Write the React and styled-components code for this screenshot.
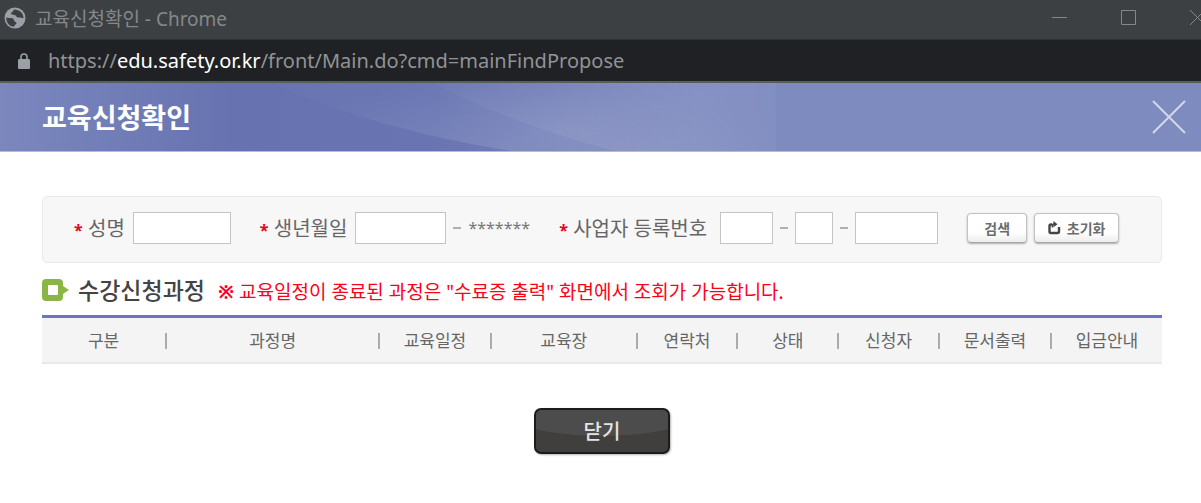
import React, { useState } from 'react'
import styled, { createGlobalStyle } from 'styled-components'

const columns = [
  { name: '구분', width: 11 },
  { name: '과정명', width: 19 },
  { name: '교육일정', width: 10 },
  { name: '교육장', width: 13 },
  { name: '연락처', width: 9 },
  { name: '상태', width: 9 },
  { name: '신청자', width: 9 },
  { name: '문서출력', width: 10 },
  { name: '입금안내', width: 10 },
]

const emptyForm = { name: '', birth: '', biz1: '', biz2: '', biz3: '' }

function GlobeIcon() {
  return (
    <svg width="22" height="22" viewBox="0 0 22 22" aria-hidden="true">
      <circle cx="11" cy="11" r="10.5" fill="#9aa0a6" />
      <path
        fill="#3c4043"
        d="M10 2.5c-1 1-.5 2-2 2.700-1.500.5-1 2 0 2.300 1.500.5 3.500 0 4 1.500.5 1.500 2 1.500 3.500 1.500s2.500 1 4 .5c0-4.500-3.500-8.500-9.500-8.500zM2.300 10.500c1.500.5 3 .5 4.700.5 2 0 3 1 3 2.500s2.500 1 2.500 2.500-2 1.500-2.500 3.700C5.500 19.500 2 15.500 2.300 10.500z"
      />
    </svg>
  )
}

function LockIcon() {
  return (
    <svg width="12" height="16" viewBox="0 0 12 16" aria-hidden="true">
      <path d="M3 7V4a3 3 0 0 1 6 0v3" fill="none" stroke="#9aa0a6" strokeWidth="1.6" />
      <rect y="6" width="12" height="10" rx="1.2" fill="#9aa0a6" />
    </svg>
  )
}

function WindowBar() {
  return (
    <TitleBar>
      <GlobeIcon />
      <WindowTitle>교육신청확인 - Chrome</WindowTitle>
      <WindowButtons>
        <WindowButton type="button" aria-label="최소화">
          <svg width="16" height="16"><path d="M0 7.5h15" /></svg>
        </WindowButton>
        <WindowButton type="button" aria-label="최대화">
          <svg width="16" height="16"><path d="M.5.5h14v14h-14z" /></svg>
        </WindowButton>
        <WindowButton type="button" aria-label="창 닫기">
          <svg width="16" height="16"><path d="M0 0l15 15M15 0L0 15" /></svg>
        </WindowButton>
      </WindowButtons>
    </TitleBar>
  )
}

function BannerArt() {
  return (
    <Art width="776" height="68" viewBox="0 0 776 68" aria-hidden="true">
      <defs>
        <linearGradient id="base">
          <stop offset="0" stopColor="#7b87bd" />
          <stop offset=".3" stopColor="#6673b0" />
          <stop offset=".56" stopColor="#6875b2" />
          <stop offset=".9" stopColor="#7e8bbf" />
          <stop offset="1" stopColor="#7e8bbf" />
        </linearGradient>
        <linearGradient id="wave" gradientUnits="userSpaceOnUse" x1="420" y1="0" x2="440" y2="80">
          <stop offset="0" stopColor="#fff" stopOpacity="0.02" />
          <stop offset="1" stopColor="#fff" stopOpacity=".12" />
        </linearGradient>
        <linearGradient id="glow" gradientUnits="userSpaceOnUse" x1="620" y1="10" x2="610" y2="80">
          <stop offset="0" stopColor="#fff" stopOpacity="0" />
          <stop offset="1" stopColor="#fff" stopOpacity=".08" />
        </linearGradient>
        <linearGradient id="fade" gradientUnits="userSpaceOnUse" x1="272" y1="0" x2="776" y2="0">
          <stop offset=".6" stopColor="#fff" />
          <stop offset="1" stopColor="#444" />
        </linearGradient>
        <mask id="edge">
          <path fill="url(#fade)" d="M0 0h776v68H0z" />
        </mask>
      </defs>
      <path fill="url(#base)" d="M0 0h776v68H0z" />
      <g mask="url(#edge)">
        <path fill="url(#wave)" d="M272 0Q380 48 512 68H776V0z" />
        <path fill="url(#glow)" d="M432 0Q520 44 616 68H776V0z" />
      </g>
    </Art>
  )
}

export default function App() {
  const [form, setForm] = useState(emptyForm)

  const field = (key) => ({
    id: key,
    value: form[key],
    onChange: (e) => setForm({ ...form, [key]: e.target.value }),
  })

  return (
    <>
      <GlobalStyle />
      <WindowBar />
      <AddressBar>
        <LockIcon />
        <Url>https://<b>edu.safety.or.kr</b>/front/Main.do?cmd=mainFindPropose</Url>
      </AddressBar>

      <Banner>
        <BannerArt />
        <BannerTitle>교육신청확인</BannerTitle>
        <BannerClose type="button" aria-label="닫기">
          <svg width="34" height="34"><path d="M1 1l32 32M33 1L1 33" /></svg>
        </BannerClose>
      </Banner>

      <Content>
        <SearchForm onSubmit={(e) => e.preventDefault()}>
          <Field>
            <Label htmlFor="name"><Star>*</Star>성명</Label>
            <Input $width={98} {...field('name')} />
          </Field>
          <Field>
            <Label htmlFor="birth"><Star>*</Star>생년월일</Label>
            <Input $width={91} maxLength={6} {...field('birth')} />
            <Dash />
            <Mask>*******</Mask>
          </Field>
          <Field>
            <Label htmlFor="biz1" $minWidth={153}><Star>*</Star>사업자 등록번호</Label>
            <Input $width={53} maxLength={3} {...field('biz1')} />
            <Dash />
            <Input $width={38} maxLength={2} aria-label="사업자 등록번호 가운데" {...field('biz2')} />
            <Dash />
            <Input $width={83} maxLength={5} aria-label="사업자 등록번호 끝" {...field('biz3')} />
          </Field>
          <Actions>
            <SmallButton type="submit" $width={60}>검색</SmallButton>
            <SmallButton type="button" $width={85} onClick={() => setForm(emptyForm)}>
              <svg width="13" height="14" viewBox="0 0 13 14" aria-hidden="true">
                <path d="M4 3.500H3A1.500 1.500 0 0 0 1.500 5v5.500A1.500 1.500 0 0 0 3 12h6.500a1.500 1.500 0 0 0 1.500-1.500V6" fill="none" stroke="#444" strokeWidth="2.400" />
                <path d="M4.500 6.500V4.500a1.500 1.500 0 0 1 1.500-1.500" fill="none" stroke="#444" strokeWidth="1.600" />
                <path d="M5.500 0L9.500 3.200 5.500 6.200z" fill="#444" />
              </svg>
              초기화
            </SmallButton>
          </Actions>
        </SearchForm>

        <SectionHead>
          <svg width="27" height="22" viewBox="0 0 27 22" aria-hidden="true">
            <path fill="#8cb548" d="M4 0h13a4 4 0 0 1 4 4v3l6 4-6 4v3a4 4 0 0 1-4 4H4a4 4 0 0 1-4-4V4a4 4 0 0 1 4-4z" />
            <rect x="6" y="6" width="10" height="10" rx="1" fill="#fff" />
          </svg>
          <SectionTitle>수강신청과정</SectionTitle>
          <Notice><b>※</b> 교육일정이 종료된 과정은 "수료증 출력" 화면에서 조회가 가능합니다.</Notice>
        </SectionHead>

        <CourseTable>
          <thead>
            <tr>
              {columns.map((col) => (
                <HeadCell key={col.name} scope="col" $width={col.width}>
                  <span>{col.name}</span>
                </HeadCell>
              ))}
            </tr>
          </thead>
        </CourseTable>

        <CloseButton type="button">닫기</CloseButton>
      </Content>
    </>
  )
}

const GlobalStyle = createGlobalStyle`
  * {
    box-sizing: border-box;
  }

  body {
    margin: 0;
    overflow-x: hidden;
    background: #fff;
    color: #666;
    font-family: 'Noto Sans', 'Noto Sans CJK KR', sans-serif;
  }

  button, input {
    font-family: inherit;
  }

  svg {
    flex-shrink: 0;
  }
`

const TitleBar = styled.header`
  display: flex;
  align-items: center;
  height: 40px;
  padding: 0 0 4px 4px;
  background: #3c4043;
  border-bottom: 1px solid #303336;
  overflow: hidden;
`

const WindowTitle = styled.span`
  margin-left: 9px;
  padding-top: 3px;
  color: #85888b;
  font-size: 19px;
  line-height: 24px;
`

const WindowButtons = styled.div`
  display: flex;
  gap: 53px;
  margin-left: auto;
  margin-right: -5px;
`

const WindowButton = styled.button`
  display: flex;
  padding: 0;
  border: 0;
  background: none;

  path {
    fill: none;
    stroke: #85888a;
  }
`

const AddressBar = styled.div`
  display: flex;
  align-items: center;
  gap: 18px;
  height: 43px;
  padding-left: 18px;
  background: #202124;
  border-bottom: 2px solid #5c5c5c;
`

const Url = styled.span`
  padding-top: 1px;
  color: #909397;
  font-size: 20px;
  line-height: 28px;

  b {
    color: #fff;
    font-weight: 400;
  }
`

const Banner = styled.div`
  position: relative;
  display: flex;
  align-items: center;
  justify-content: space-between;
  height: 69px;
  padding: 0 15px 0 42px;
  background: #7e8bbf;
  border-bottom: 1px solid #b4bbda;
`

const Art = styled.svg`
  position: absolute;
  top: 0;
  left: 0;
`

const BannerTitle = styled.h1`
  position: relative;
  margin: 0;
  padding-top: 2px;
  color: #fff;
  font-size: 27px;
  font-weight: 700;
  line-height: 36px;
`

const BannerClose = styled.button`
  display: flex;
  padding: 0;
  border: 0;
  background: none;
  cursor: pointer;

  path {
    stroke: #d3d7ea;
    stroke-width: 2;
  }
`

const Content = styled.main`
  display: flex;
  flex-direction: column;
  padding: 44px 39px 48px 42px;
`

const SearchForm = styled.form`
  display: flex;
  align-items: center;
  gap: 29px;
  height: 67px;
  padding: 0 31px 3px;
  background: #f7f7f7;
  border: 1px solid #e9e9e9;
  border-radius: 5px;
`

const Field = styled.div`
  display: flex;
  align-items: center;
  white-space: nowrap;
`

const Label = styled.label`
  min-width: ${({ $minWidth }) => ($minWidth ? `${$minWidth}px` : 'auto')};
  margin-right: 8px;
  padding-top: 2px;
  font-size: 20px;
  line-height: 28px;
`

const Star = styled.span`
  display: inline-block;
  width: 14px;
  color: #e60024;
  font-size: 16px;
  font-weight: 700;
  line-height: 20px;
`

const Input = styled.input`
  width: ${({ $width }) => $width}px;
  height: 32px;
  padding: 0 6px;
  border: 1px solid #c4c4c4;
  background: #fff;
  color: #555;
  font-size: 18px;
`

const Dash = styled.span`
  width: 8px;
  height: 2px;
  margin: 0 7px;
  background: #b0b0b0;
`

const Mask = styled.span`
  color: #777;
  font-size: 16px;
  line-height: 24px;
`

const Actions = styled.div`
  display: flex;
  gap: 7px;
`

const SmallButton = styled.button`
  display: flex;
  align-items: center;
  justify-content: center;
  gap: 6px;
  width: ${({ $width }) => $width}px;
  height: 30px;
  padding: 0 0 1px;
  border: 1px solid #c2c2c2;
  border-bottom-color: #a5a5a5;
  border-radius: 4px;
  background: linear-gradient(#fff 65%, #ededed);
  box-shadow: 0 1px 2px rgba(0, 0, 0, 0.3);
  color: #6c6c6c;
  font-size: 14px;
  font-weight: 700;
  white-space: nowrap;
  cursor: pointer;
`

const SectionHead = styled.div`
  display: flex;
  align-items: center;
  height: 52px;
  padding-top: 2px;
`

const SectionTitle = styled.h2`
  margin: 0 13px 0 9px;
  color: #444;
  font-size: 23px;
  font-weight: 500;
  line-height: 32px;
`

const Notice = styled.p`
  margin: 0;
  padding-top: 3px;
  color: #ff0018;
  font-size: 19px;
  line-height: 28px;
`

const CourseTable = styled.table`
  width: 100%;
  table-layout: fixed;
  border-collapse: collapse;
  background: #f4f4f4;
  border-top: 3px solid #6f72cb;
  border-bottom: 2px solid #e8e8e8;
`

const HeadCell = styled.th`
  width: ${({ $width }) => $width}%;
  height: 46px;
  padding: 2px 0 0;
  font-size: 17px;
  font-weight: 400;

  span {
    display: block;
    line-height: 16px;
  }

  &:not(:first-child) span {
    border-left: 2px solid #ababab;
  }
`

const CloseButton = styled.button`
  align-self: center;
  width: 136px;
  height: 46px;
  margin-top: 44px;
  padding: 0 0 1px;
  border: 2px solid #1c1c1c;
  border-radius: 7px;
  background:
    radial-gradient(ellipse 100px 26px at 50% 0, #4d4c4c 98%, transparent 100%),
    #413f3e;
  box-shadow: 1px 1px 2px rgba(0, 0, 0, 0.3);
  color: #e4e4e4;
  font-size: 20px;
  font-weight: 500;
  cursor: pointer;
`
